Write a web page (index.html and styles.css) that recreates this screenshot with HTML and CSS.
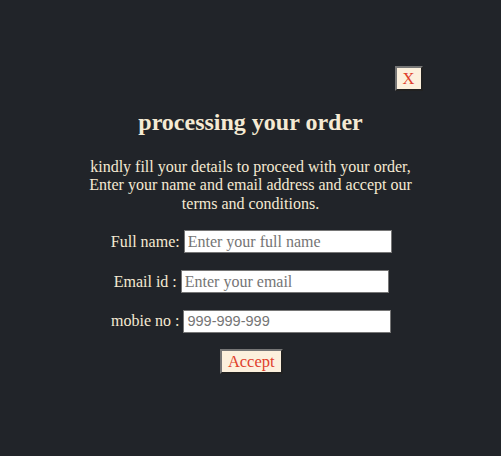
FILE: index.html
```html
<!DOCTYPE html>
<html>
<head>
<meta charset="utf-8">
<link rel="stylesheet" href="styles.css">
</head>
<body>
<div class="modal">
  <div class="close-row"><button class="btn close">X</button></div>
  <h2 class="title">processing your order</h2>
  <p class="intro">kindly fill your details to proceed with your order, Enter your name and email address and accept our terms and conditions.</p>
  <form class="form">
    <div class="row"><label>Full name:</label> <input class="field" type="text" placeholder="Enter your full name"></div>
    <div class="row"><label>Email id :</label> <input class="field" type="text" placeholder="Enter your email"></div>
    <div class="row"><label>mobie no :</label> <input class="field tel" type="tel" placeholder="999-999-999"></div>
    <div class="row"><button class="btn accept" type="button">Accept</button></div>
  </form>
</div>
</body>
</html>
```
FILE: styles.css
```css
html, body {
  margin: 0;
  background: #212429;
}
body {
  padding: 8px;
  font-family: "Liberation Serif", "Times New Roman", serif;
  font-size: 16px;
  color: #f5ead3;
}
.modal {
  width: 344px;
  margin: 58px auto 0;
  text-align: center;
}
.close-row {
  text-align: right;
}
.btn {
  font-family: "Liberation Serif", serif;
  font-size: 16.5px;
  line-height: 19px;
  background: #fcf0dd;
  color: #e0402c;
  border: 2px outset #767676;
  padding: 1px 6px;
}
.title {
  font-size: 24px;
  font-weight: bold;
  margin: 18px 0 0;
}
.intro {
  margin: 22px 0 0;
  line-height: 18.4px;
}
.form {
  margin-top: 17px;
  padding-left: 1.5px;
}
.row {
  margin-bottom: 17px;
}
.row:last-child {
  margin-top: -1px;
}
.field {
  font-family: "Liberation Serif", serif;
  font-size: 16px;
  line-height: 17px;
  width: 200px;
  border: 1px solid #767676;
  padding: 2px 3px;
}
.tel {
  font-family: "Liberation Sans", Arial, sans-serif;
  font-size: 14.5px;
}
```
